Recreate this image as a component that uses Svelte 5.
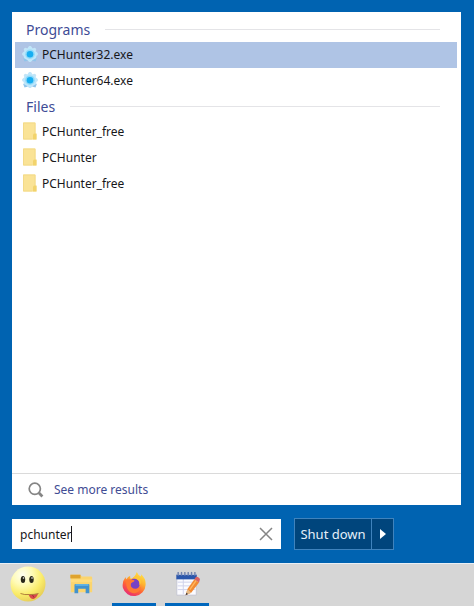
<script lang="ts">
	type Entry = { id: number; name: string };

	const programs: Entry[] = [
		{ id: 1, name: 'PCHunter32.exe' },
		{ id: 2, name: 'PCHunter64.exe' }
	];

	const files: Entry[] = [
		{ id: 3, name: 'PCHunter_free' },
		{ id: 4, name: 'PCHunter' },
		{ id: 5, name: 'PCHunter_free' }
	];

	const petals = [0, 45, 90, 135, 180, 225, 270, 315];
	const rings = [0, 1, 2, 3, 4, 5];

	let query = $state('pchunter');
	let selected = $state(1);
	let field: HTMLInputElement;

	const clear = (): void => {
		query = '';
		field.focus();
	};
</script>

{#snippet programIcon()}
	<svg class="icon" viewBox="0 0 18 18" aria-hidden="true">
		{#each petals as angle}
			<circle cx="9" cy="2.8" r="1.8" fill="#c3e5f7" transform="rotate({angle} 9 9)" />
		{/each}
		<path d="M9 .8 16 7.500 15 13 9 17 3 13 2 7.500Z" fill="#bfe6fa" />
		<path d="M2 12.500 3.500 16.500 7 15.500zM16 12.500 14.500 16.500 11 15.500z" fill="#8fc4ea" />
		<circle cx="9" cy="9.200" r="4.800" fill="#8fdaf9" />
		<circle cx="9" cy="9.200" r="3.300" fill="#17aef1" />
	</svg>
{/snippet}

{#snippet folderIcon()}
	<svg class="icon" viewBox="0 0 18 18" aria-hidden="true">
		<path d="M2 .5h12.500v11l1 .5v5.500H2z" fill="#fae396" />
		<path d="M2.500 1h11.500v10.500M2.500 1v16h9" fill="none" stroke="#f3da88" />
		<path d="M12 17.500v-5l1-1h2.500v6z" fill="#f2d36c" />
	</svg>
{/snippet}

<div class="desktop">
	<main class="menu">
		<div class="results">
			<section>
				<h2>Programs</h2>
				{#each programs as item (item.id)}
					<button class="row" class:selected={selected === item.id} onclick={() => (selected = item.id)}>
						{@render programIcon()}
						{item.name}
					</button>
				{/each}
			</section>
			<section>
				<h2>Files</h2>
				{#each files as item (item.id)}
					<button class="row" class:selected={selected === item.id} onclick={() => (selected = item.id)}>
						{@render folderIcon()}
						{item.name}
					</button>
				{/each}
			</section>
			<a class="more" href="#results">
				<svg viewBox="0 0 16 16" aria-hidden="true">
					<circle cx="6.800" cy="6.800" r="5.600" fill="none" stroke="#858585" stroke-width="1.700" />
					<path d="m10.800 10.800 3.600 3.600" stroke="#858585" stroke-width="2.800" />
				</svg>
				See more results
			</a>
		</div>

		<div class="actions">
			<div class="search">
				<label>
					<input type="text" aria-label="Search programs and files" bind:value={query} bind:this={field} />
					<span class="caret"></span>
				</label>
				<button class="clear" aria-label="Clear search" onclick={clear}>
					<svg viewBox="0 0 14 14" aria-hidden="true">
						<path d="m1 1 12 12M13 1 1 13" stroke="#858585" stroke-width="1.500" />
					</svg>
				</button>
			</div>
			<div class="power">
				<button class="shutdown">Shut down</button>
				<button class="options" aria-label="Power options">
					<svg viewBox="0 0 6 10" aria-hidden="true"><path d="M0 0 6 5 0 10z" fill="#fff" /></svg>
				</button>
			</div>
		</div>
	</main>

	<nav class="taskbar" aria-label="Taskbar">
		<button aria-label="Start">
			<svg class="start" viewBox="0 0 36 36" aria-hidden="true">
				<defs>
					<radialGradient id="face" cx="34%" cy="24%" r="80%">
						<stop offset="0" stop-color="#fffff0" />
						<stop offset="0.350" stop-color="#fffbb8" />
						<stop offset="0.700" stop-color="#faec6a" />
						<stop offset="1" stop-color="#e6cd58" />
					</radialGradient>
				</defs>
				<circle cx="18" cy="18" r="17.500" fill="url(#face)" />
				<ellipse cx="13" cy="13.500" rx="2.200" ry="3.500" fill="#292719" />
				<ellipse cx="21.500" cy="13.500" rx="2.200" ry="3.500" fill="#292719" />
				<circle cx="13.500" cy="12" r="0.800" fill="#fff" />
				<circle cx="22" cy="12" r="0.800" fill="#fff" />
				<path d="M18.500 28.500q2 4.800 5 4.500 3-1 4.500-5z" fill="#d94a4b" />
				<path d="m22.500 29 1.500 2.500" stroke="#a02d32" />
				<path d="M10.500 27.500q4 1.600 9 1 4.500.3 9-1" fill="none" stroke="#b0803a" />
			</svg>
		</button>
		<button aria-label="File Explorer">
			<svg viewBox="0 0 28 28" aria-hidden="true">
				<path d="M3 5V4h10l2 2h10q1 0 1 1v16H3z" fill="#fbd56f" />
				<path d="M2.500 4h11v4h-11z" fill="#dfa32e" />
				<path d="M3 9h23v3H3z" fill="#ffdc7b" />
				<path d="M7 24V15q0-1 1-1h14q1 0 1 1v9h-4v-5h-8v5z" fill="#4292ce" />
				<path d="M8 15h14" stroke="#62b3e3" stroke-width="2" />
			</svg>
		</button>
		<button class="running" aria-label="Firefox">
			<svg viewBox="0 0 28 28" aria-hidden="true">
				<defs>
					<linearGradient id="flame" x1="0.800" y1="0" x2="0.250" y2="1">
						<stop offset="0" stop-color="#ffe54b" />
						<stop offset="0.350" stop-color="#ffb42e" />
						<stop offset="0.650" stop-color="#ff6336" />
						<stop offset="1" stop-color="#e5267d" />
					</linearGradient>
				</defs>
				<path
					d="M17 1q1 3 4.500 5 .2-1 0-2.500Q27 8 26.500 15A12.500 12.500 0 0 1 2 18Q.8 11.500 5 6.500q0 1.500.8 2.300Q7.500 6 10 5q-.5 2 .5 3.500Q15 7 17 1"
					fill="url(#flame)"
				/>
				<circle cx="14.500" cy="14" r="5.800" fill="#7742c5" />
				<path d="M10 8.500q5-2 8.500 1.500 2 2 1.500 5.500 3-4-.5-8.500Q15 4.500 12 8" fill="#ffc736" />
				<path d="M5.500 10q3-2 6.500-.5 1 .5 2.500.5.5 1.500-2.500 2.500-1.500.5-1.500 2.500 0 3.500 5 4.200 3.500.2 6-2.200-1 6-7 7Q5 23.500 5.500 10" fill="#ff7933" />
			</svg>
		</button>
		<button class="running" aria-label="Notepad">
			<svg viewBox="0 0 28 28" aria-hidden="true">
				<path d="M3 3h21v23H3z" fill="#fbfbff" stroke="#c5c6d2" />
				<path d="M4 12h19M4 16h19M4 20h19M10 8v17" stroke="#cdd0ea" />
				<path d="M2.500 4h22v5h-22z" fill="#2b57ac" />
				{#each rings as ring}
					<path d="M{4.5 + ring * 3.6} 1v4" stroke="#6f82ad" stroke-width="1.500" />
				{/each}
				<path d="m12.500 26 2-6.500L22 9l5 3.500-8.500 11z" fill="#f28a32" />
				<path d="m17 20 7-10" stroke="#ffb75d" stroke-width="1.500" />
				<path d="m22 9 1.500-2.500q2-1 4.500 2L27 12.500z" fill="#dc6362" />
				<path d="m12.500 26 2-6.500 4 4z" fill="#e6bb86" />
				<path d="m12.500 26 .9-2.700 1.700 1.600z" fill="#34313b" />
			</svg>
		</button>
	</nav>
</div>

<style>
	:global(body) {
		margin: 0;
		background: #0063b1;
		font-family: 'Noto Sans', 'Open Sans', sans-serif;
		font-size: 12px;
	}

	.desktop {
		display: flex;
		flex-direction: column;
		min-height: 100vh;
	}

	button,
	input {
		margin: 0;
		padding: 0;
		border: 0;
		background: none;
		color: inherit;
		font: inherit;
	}

	svg {
		display: block;
		flex: none;
	}

	.menu {
		flex: 1;
		display: flex;
		flex-direction: column;
		gap: 13px;
		padding: 12px 13px 13px 12px;
	}

	.results {
		flex: 1;
		display: flex;
		flex-direction: column;
		padding-top: 5px;
		background: #fff;
	}

	section {
		padding: 0 4px 0 3px;
	}

	h2 {
		display: flex;
		align-items: center;
		gap: 15px;
		height: 25px;
		margin: 0;
		padding: 0 17px 0 11px;
		color: #3e4c96;
		font-size: 14px;
		font-weight: 400;
	}

	h2::after {
		content: '';
		flex: 1;
		height: 1px;
		background: #e4e4e7;
	}

	.row {
		display: flex;
		align-items: center;
		gap: 3px;
		width: 100%;
		height: 26px;
		padding: 0 6px 2px;
		color: #17171a;
		text-align: left;
	}

	.row.selected {
		background: #afc4e5;
	}

	.icon {
		width: 18px;
		height: 18px;
	}

	.more {
		display: flex;
		align-items: center;
		gap: 10px;
		height: 31px;
		margin-top: auto;
		padding: 0 16px;
		border-top: 1px solid #dadada;
		color: #414c94;
		text-decoration: none;
	}

	.more svg {
		width: 16px;
		height: 16px;
	}

	.actions {
		display: flex;
		align-items: center;
		gap: 13px;
	}

	.search {
		flex: 1;
		display: flex;
		height: 30px;
		background: #fff;
		color: #17171a;
	}

	label {
		flex: 1;
		display: flex;
		align-items: center;
		padding-left: 8px;
		cursor: text;
	}

	input {
		field-sizing: content;
		caret-color: transparent;
		outline: none;
	}

	.caret {
		width: 1px;
		height: 16px;
		background: #17171a;
	}

	.clear {
		display: grid;
		place-items: center;
		width: 30px;
	}

	.clear svg {
		width: 14px;
		height: 14px;
	}

	.power {
		display: flex;
		box-sizing: border-box;
		height: 32px;
		margin-right: 67px;
		border: 1px solid #3f83bd;
		background: #00457c;
		color: #e4f0fa;
	}

	.shutdown {
		width: 76px;
		font-size: 13px;
	}

	.options {
		display: grid;
		place-items: center;
		width: 22px;
		border-left: 1px solid #3f83bd;
	}

	.options svg {
		width: 6px;
		height: 10px;
	}

	.taskbar {
		display: flex;
		gap: 9px;
		box-sizing: border-box;
		height: 43px;
		padding: 0 6px;
		border-top: 1px solid #e9eff5;
		background: #d6d6d6;
	}

	.taskbar button {
		display: grid;
		place-items: center;
		width: 44px;
		border-bottom: 3px solid transparent;
	}

	.taskbar button.running {
		border-color: #0067bd;
	}

	.taskbar svg {
		width: 26px;
		height: 26px;
	}

	.taskbar .start {
		width: 36px;
		height: 36px;
	}
</style>
